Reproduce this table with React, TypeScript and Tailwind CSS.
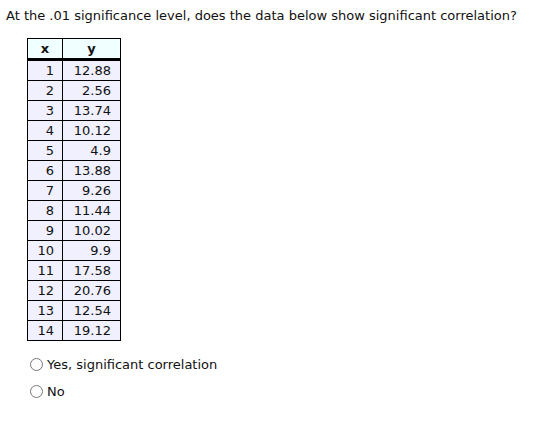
const ROWS: [number, string][] = [
  [1, '12.88'],
  [2, '2.56'],
  [3, '13.74'],
  [4, '10.12'],
  [5, '4.9'],
  [6, '13.88'],
  [7, '9.26'],
  [8, '11.44'],
  [9, '10.02'],
  [10, '9.9'],
  [11, '17.58'],
  [12, '20.76'],
  [13, '12.54'],
  [14, '19.12'],
]

function Radio({ label }: { label: string }) {
  return (
    <label className="flex items-center gap-[4px] h-[27px]">
      <span className="w-[13px] h-[13px] rounded-full border border-[#767676] bg-white" />
      <span>{label}</span>
    </label>
  )
}

export default function App() {
  return (
    <div className="w-[541px] h-[421px] bg-white text-[#111] text-[13px] font-['DejaVu_Sans',sans-serif] pt-[8px] pl-[6px]">
      <p className="leading-[16px]">At the .01 significance level, does the data below show significant correlation?</p>

      <table className="mt-[14px] ml-[21px] border-collapse leading-[19px]">
        <thead>
          <tr className="bg-[#f0ffff]">
            <th className="w-[35px] h-[20px] border border-black border-b-[3px] font-bold text-center">x</th>
            <th className="w-[58px] h-[20px] border border-black border-b-[3px] font-bold text-center">y</th>
          </tr>
        </thead>
        <tbody>
          {ROWS.map(([x, y]) => (
            <tr key={x} className="bg-[#f0f0ff]">
              <td className="h-[20px] border border-black text-right pr-[8px]">{x}</td>
              <td className="h-[20px] border border-black text-right pr-[9px]">{y}</td>
            </tr>
          ))}
        </tbody>
      </table>

      <div className="mt-[10px] ml-[24px]">
        <Radio label="Yes, significant correlation" />
        <Radio label="No" />
      </div>
    </div>
  )
}
